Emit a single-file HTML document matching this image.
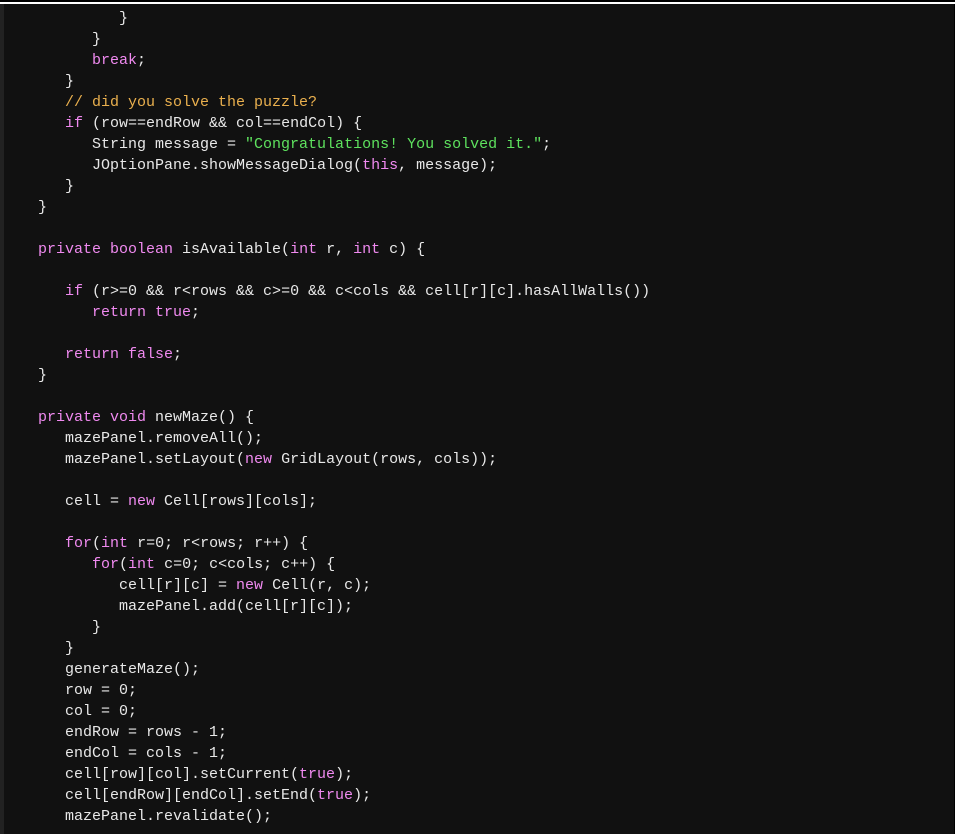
<!DOCTYPE html>
<html><head><style>
html,body{margin:0;padding:0;}
body{width:955px;height:834px;background:#111;position:relative;overflow:hidden;}
.top1{position:absolute;left:0;top:0;width:955px;height:2px;background:#000;}
.top2{position:absolute;left:0;top:2px;width:955px;height:2px;background:#fff;}
.left{position:absolute;left:0;top:4px;width:4px;height:830px;background:#222;}
.right{position:absolute;right:0;top:4px;width:1px;height:830px;background:#000;}
pre{position:absolute;left:38px;top:8px;margin:0;font-family:"Liberation Mono",monospace;font-size:15px;line-height:21px;color:#e8e8e8;}
.k{color:#f08af0}.c{color:#eab04e}.s{color:#5ee25e}
</style></head><body>
<div class="top1"></div><div class="top2"></div><div class="left"></div><div class="right"></div>
<pre>         }
      }
      <span class="k">break</span>;
   }
   <span class="c">// did you solve the puzzle?</span>
   <span class="k">if</span> (row==endRow &amp;&amp; col==endCol) {
      String message = <span class="s">"Congratulations! You solved it."</span>;
      JOptionPane.showMessageDialog(<span class="k">this</span>, message);
   }
}

<span class="k">private boolean</span> isAvailable(<span class="k">int</span> r, <span class="k">int</span> c) {

   <span class="k">if</span> (r&gt;=0 &amp;&amp; r&lt;rows &amp;&amp; c&gt;=0 &amp;&amp; c&lt;cols &amp;&amp; cell[r][c].hasAllWalls())
      <span class="k">return true</span>;

   <span class="k">return false</span>;
}

<span class="k">private void</span> newMaze() {
   mazePanel.removeAll();
   mazePanel.setLayout(<span class="k">new</span> GridLayout(rows, cols));

   cell = <span class="k">new</span> Cell[rows][cols];

   <span class="k">for</span>(<span class="k">int</span> r=0; r&lt;rows; r++) {
      <span class="k">for</span>(<span class="k">int</span> c=0; c&lt;cols; c++) {
         cell[r][c] = <span class="k">new</span> Cell(r, c);
         mazePanel.add(cell[r][c]);
      }
   }
   generateMaze();
   row = 0;
   col = 0;
   endRow = rows - 1;
   endCol = cols - 1;
   cell[row][col].setCurrent(<span class="k">true</span>);
   cell[endRow][endCol].setEnd(<span class="k">true</span>);
   mazePanel.revalidate();
</pre>
</body></html>
